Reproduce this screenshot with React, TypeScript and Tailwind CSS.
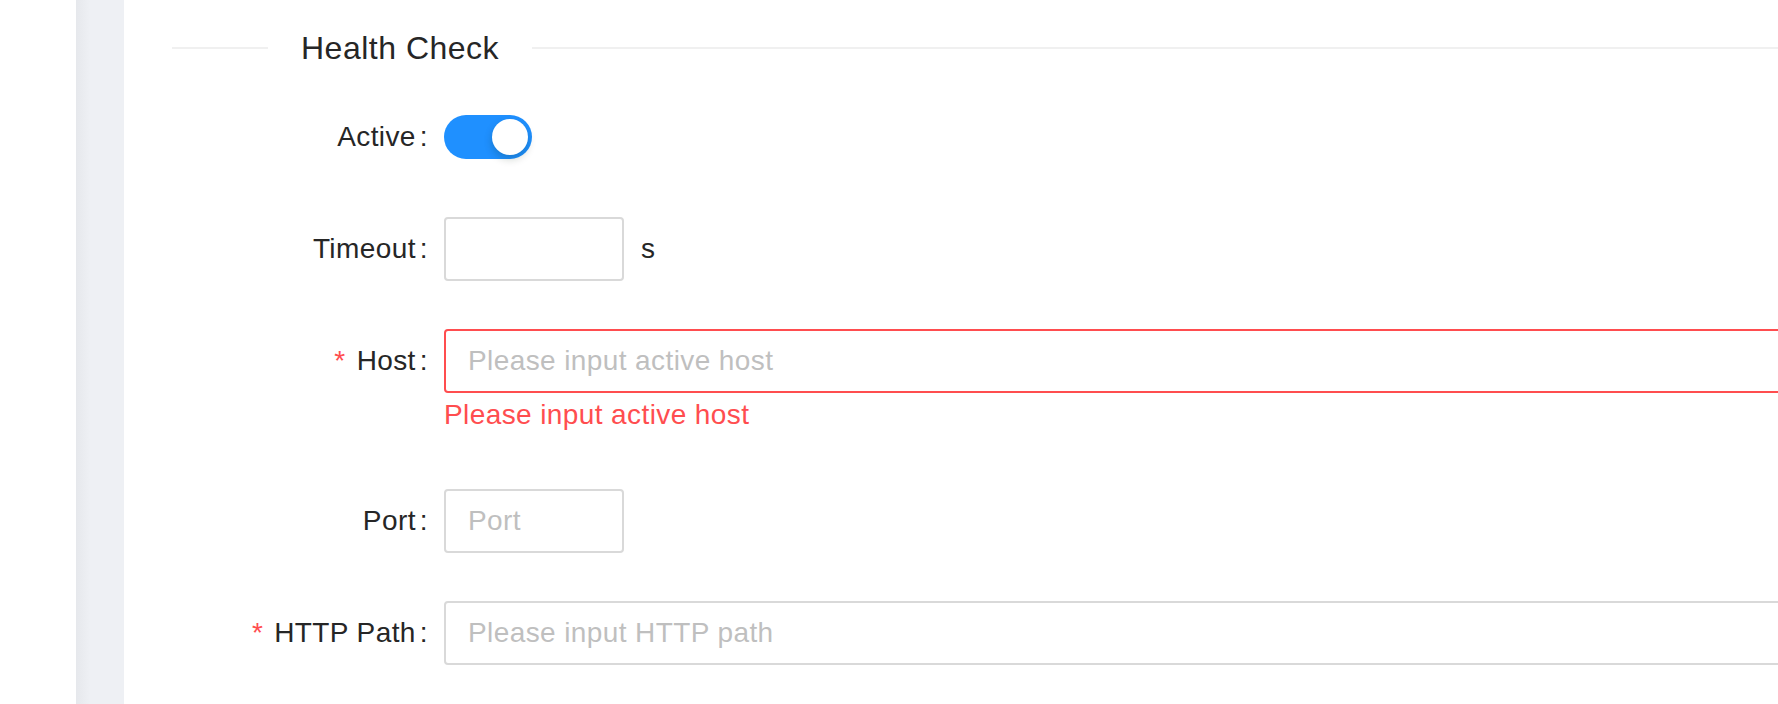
import React from "react";

const font = { fontFamily: '"Liberation Sans", Arial, sans-serif' };

function Label({ text, required }: { text: string; required?: boolean }) {
  return (
    <div className="w-[272px] shrink-0 flex items-center justify-end text-[28px] text-[#262626] tracking-[0.4px]">
      {required && <span className="text-[#ff4d4f] mr-[11px] text-[28px]">*</span>}
      <span>{text}</span>
      <span className="ml-[4px] mr-[16px]">:</span>
    </div>
  );
}

function Input({ placeholder, width, error }: { placeholder?: string; width?: string; error?: boolean }) {
  return (
    <input
      placeholder={placeholder}
      className={
        "h-[64px] rounded-[4px] border-2 px-[22px] text-[28px] tracking-[0.4px] text-[#262626] placeholder:text-[#bfbfbf] outline-none bg-white " +
        (error ? "border-[#ff4d4f] " : "border-[#d9d9d9] ") +
        (width ? width : "flex-1 min-w-0")
      }
      style={font}
    />
  );
}

export default function App() {
  return (
    <div className="flex h-[704px] w-full overflow-hidden bg-white" style={font}>
      <div className="w-[76px] shrink-0 bg-white" />
      <div className="w-[48px] shrink-0 bg-[linear-gradient(to_right,#e6e8ec,#eef0f4_14px)]" />
      <div className="flex-1 mr-[-300px] pl-[48px] pt-[23px]">
        <div className="flex items-center h-[50px]">
          <div className="w-[96px] h-[2px] bg-[#f0f0f0]" />
          <div className="px-[33px] text-[32px] text-[#262626] tracking-[0.5px] leading-[50px]">Health Check</div>
          <div className="flex-1 h-[2px] bg-[#f0f0f0]" />
        </div>

        <div className="mt-[32px] flex flex-col">
          <div className="flex items-center h-[64px] mb-[48px]">
            <Label text="Active" />
            <div className="w-[88px] h-[44px] rounded-full bg-[#1f90ff] flex items-center justify-end p-[4px]">
              <div className="w-[36px] h-[36px] rounded-full bg-white shadow-[0_4px_8px_0_rgba(0,35,11,0.2)]" />
            </div>
          </div>

          <div className="flex items-center h-[64px] mb-[48px]">
            <Label text="Timeout" />
            <Input width="w-[180px]" />
            <span className="ml-[17px] text-[28px] text-[#262626]">s</span>
          </div>

          <div className="flex items-center h-[64px]">
            <Label text="Host" required />
            <Input placeholder="Please input active host" error />
          </div>
          <div className="h-[48px] mb-[48px] pl-[272px] pb-[4px] flex items-center text-[28px] text-[#ff4d4f] tracking-[0.4px]">
            Please input active host
          </div>

          <div className="flex items-center h-[64px] mb-[48px]">
            <Label text="Port" />
            <Input placeholder="Port" width="w-[180px]" />
          </div>

          <div className="flex items-center h-[64px]">
            <Label text="HTTP Path" required />
            <Input placeholder="Please input HTTP path" />
          </div>
        </div>
      </div>
    </div>
  );
}
